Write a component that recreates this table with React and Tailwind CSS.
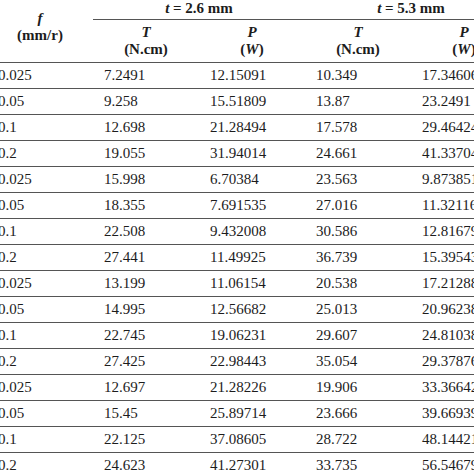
import React from 'react';

const rows = [
  ['0.025', '7.2491', '12.15091', '10.349', '17.34606'],
  ['0.05', '9.258', '15.51809', '13.87', '23.2491'],
  ['0.1', '12.698', '21.28494', '17.578', '29.46424'],
  ['0.2', '19.055', '31.94014', '24.661', '41.33704'],
  ['0.025', '15.998', '6.70384', '23.563', '9.873851'],
  ['0.05', '18.355', '7.691535', '27.016', '11.32116'],
  ['0.1', '22.508', '9.432008', '30.586', '12.81679'],
  ['0.2', '27.441', '11.49925', '36.739', '15.39543'],
  ['0.025', '13.199', '11.06154', '20.538', '17.21288'],
  ['0.05', '14.995', '12.56682', '25.013', '20.96238'],
  ['0.1', '22.745', '19.06231', '29.607', '24.81038'],
  ['0.2', '27.425', '22.98443', '35.054', '29.37876'],
  ['0.025', '12.697', '21.28226', '19.906', '33.36642'],
  ['0.05', '15.45', '25.89714', '23.666', '39.66939'],
  ['0.1', '22.125', '37.08605', '28.722', '48.14421'],
  ['0.2', '24.623', '41.27301', '33.735', '56.54679'],
];

function HeadCell({ sym, unit }) {
  return (
    <div className="w-[106px] flex flex-col items-center justify-center font-bold leading-[17px]">
      <div className="italic">{sym}</div>
      <div>{unit}</div>
    </div>
  );
}

export default function App() {
  return (
    <div className="w-[474px] h-[474px] overflow-hidden bg-white text-[#1c1c1c] text-[15px] font-['Liberation_Serif',serif]">
      <div className="w-[530px] -ml-[13px] -mt-[9px]">
        {/* header */}
        <div className="flex h-[72px] border-b border-[#555]">
          <div className="w-[106px] flex flex-col items-center justify-center font-bold leading-[17px]">
            <div className="italic">f</div>
            <div>(mm/r)</div>
          </div>
          <div className="flex-1 flex flex-col">
            <div className="flex h-[29px] border-b border-[#555] font-bold leading-[17px]">
              <div className="w-[212px] flex items-end justify-center pb-[2px]">
                <span className="italic">t</span>&nbsp;= 2.6 mm
              </div>
              <div className="w-[212px] flex items-end justify-center pb-[2px]">
                <span className="italic">t</span>&nbsp;= 5.3 mm
              </div>
            </div>
            <div className="flex flex-1">
              <HeadCell sym="T" unit="(N.cm)" />
              <HeadCell sym="P" unit={<>(<span className="italic">W</span>)</>} />
              <HeadCell sym="T" unit="(N.cm)" />
              <HeadCell sym="P" unit={<>(<span className="italic">W</span>)</>} />
            </div>
          </div>
        </div>

        {/* body */}
        {rows.map((r, i) => (
          <div key={i} className="flex h-[26px] border-b border-[#555]">
            {r.map((v, j) => (
              <div key={j} className="w-[106px] pl-[11px] flex items-center whitespace-nowrap">
                {v}
              </div>
            ))}
          </div>
        ))}
      </div>
    </div>
  );
}
